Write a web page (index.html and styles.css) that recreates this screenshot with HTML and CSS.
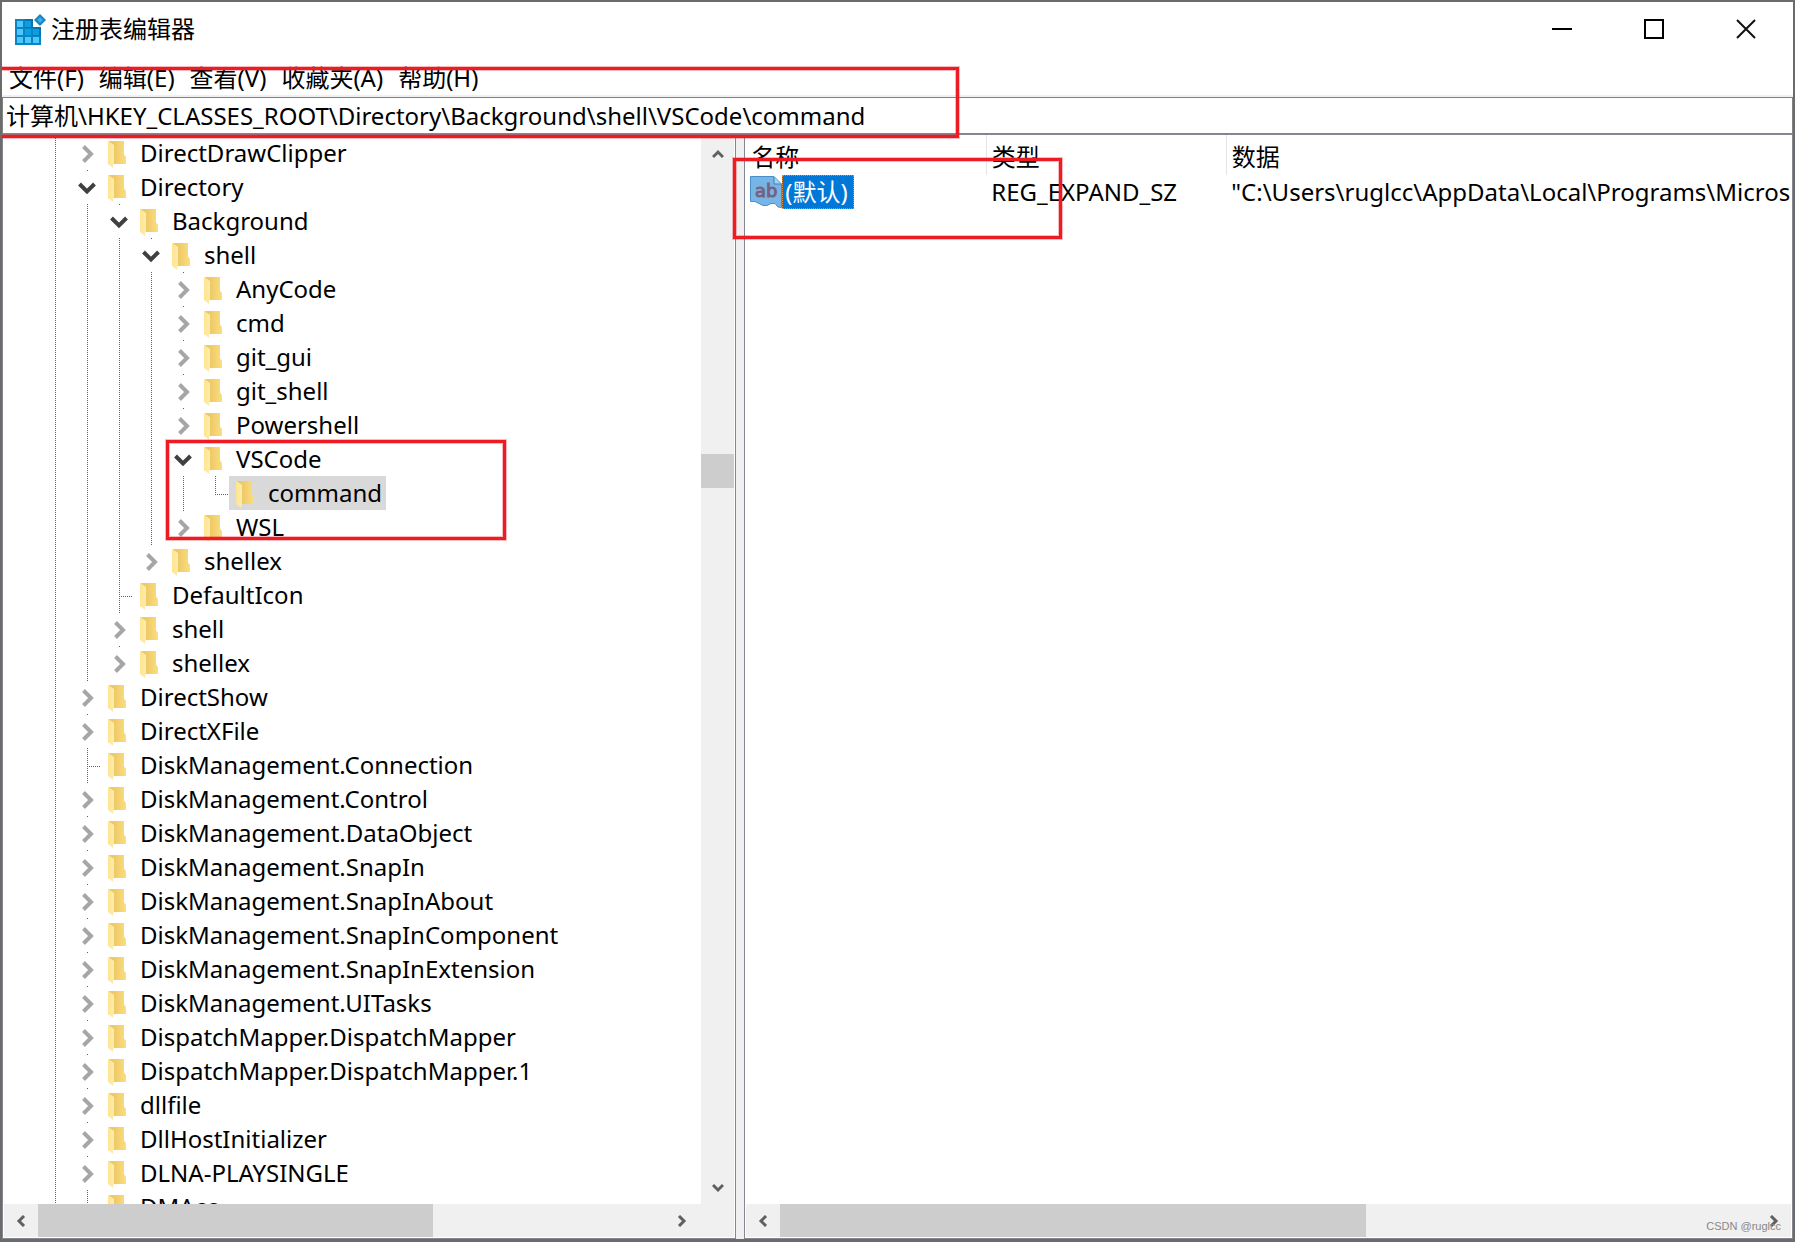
FILE: index.html
```html
<!DOCTYPE html>
<html lang="zh-CN">
<head>
  <meta charset="UTF-8" />
  <meta name="viewport" content="width=device-width, initial-scale=1.0"/>
  <title>注册表编辑器</title>
  <link rel="stylesheet" href="styles.css">
</head>
<body>

  <!-- shared icons -->
  <svg class="sprite" aria-hidden="true">
    <defs>
      <linearGradient id="folderBack" x1="0" x2="1">
        <stop offset="0.3" stop-color="#eec965"/>
        <stop offset="1" stop-color="#fbde80"/>
      </linearGradient>
      <linearGradient id="folderFront" x1="0" x2="1">
        <stop offset="0" stop-color="#ffe48f"/>
        <stop offset="1" stop-color="#ffecb0"/>
      </linearGradient>
    </defs>
    <symbol id="folder" viewBox="0 0 20 28">
      <path d="M1 0H16V13.500L18 16V23H5Z" fill="url(#folderBack)"/>
      <path d="M0 0L6 4V21L5 27L0 23Z" fill="url(#folderFront)"/>
    </symbol>
    <symbol id="closed" viewBox="0 0 32 34">
      <path d="M14.500 10.500L22 18L14.500 25.500" fill="none" stroke="#a6a6a6" stroke-width="4"/>
    </symbol>
    <symbol id="open" viewBox="0 0 32 34">
      <path d="M10.500 14L18 21.500L25.500 14" fill="none" stroke="#404040" stroke-width="4"/>
    </symbol>
    <symbol id="arrow" viewBox="0 0 12 12">
      <path d="M1 9L6 4L11 9" fill="none" stroke="#606060" stroke-width="3"/>
    </symbol>
  </svg>

  <div class="window">
    <header class="titlebar">
      <svg class="app-icon" viewBox="0 0 32 32" aria-hidden="true">
        <path d="M0 5H18V13H26V31H0Z" fill="#0c83c4"/>
        <path d="M10 5H18V13H26V22H18V14H10Z" fill="#0872ab"/>
        <g fill="#4cc8fa">
          <rect x="2" y="7" width="6" height="6"/>
          <rect x="2" y="15" width="6" height="6"/>
          <rect x="2" y="23" width="6" height="6"/>
          <rect x="10" y="23" width="6" height="6"/>
          <rect x="18" y="23" width="6" height="6"/>
        </g>
        <g fill="#0a9fe2">
          <rect x="10" y="7" width="6" height="6"/>
          <rect x="10" y="15" width="6" height="6"/>
          <rect x="18" y="15" width="6" height="6"/>
        </g>
        <path d="M25 0L31 6L25 12L19 6Z" fill="#1785bf"/>
        <path d="M25 3L28 6L25 9L22 6Z" fill="#41acdf"/>
      </svg>
      <h1 class="title">注册表编辑器</h1>
      <div class="win-buttons">
        <button aria-label="最小化"><svg viewBox="0 0 20 20"><path d="M0 10H20" stroke="#000" stroke-width="2"/></svg></button>
        <button aria-label="最大化"><svg viewBox="0 0 20 20"><path d="M1 1H19V19H1Z" fill="none" stroke="#000" stroke-width="2"/></svg></button>
        <button aria-label="关闭"><svg viewBox="0 0 20 20"><path d="M1 1L19 19M19 1L1 19" stroke="#111" stroke-width="2"/></svg></button>
      </div>
    </header>

    <nav class="menubar">
      <button>文件(F)</button>
      <button>编辑(E)</button>
      <button>查看(V)</button>
      <button>收藏夹(A)</button>
      <button>帮助(H)</button>
    </nav>

    <input class="address" type="text" aria-label="地址" spellcheck="false" value="计算机\HKEY_CLASSES_ROOT\Directory\Background\shell\VSCode\command">

    <main class="panes">
      <section class="pane tree-pane">
        <div class="pane-body">
          <div class="tree" id="tree" role="tree"></div>
          <div class="scrollbar vertical">
            <button aria-label="向上"><svg><use href="#arrow"/></svg></button>
            <div class="track"><span class="space-before"></span><span class="thumb"></span><span class="space-after"></span></div>
            <button aria-label="向下"><svg class="down"><use href="#arrow"/></svg></button>
          </div>
        </div>
        <div class="scrollbar horizontal">
          <button aria-label="向左"><svg class="left"><use href="#arrow"/></svg></button>
          <div class="track"><span class="thumb"></span></div>
          <button aria-label="向右"><svg class="right"><use href="#arrow"/></svg></button>
          <span class="corner"></span>
        </div>
      </section>

      <section class="pane list-pane">
        <div class="pane-body">
          <table class="values">
            <thead>
              <tr><th class="col-name">名称</th><th class="col-type">类型</th><th>数据</th></tr>
            </thead>
            <tbody>
              <tr>
                <td class="name-cell">
                  <div class="value-name">
                    <svg class="value-icon" viewBox="0 0 32 32" aria-hidden="true">
                      <path d="M0.500 0.500H24L31.500 8V31.500L28 31L25 27.500H21L17 29.500H13L5 25.500H0.500Z" fill="#76b5e6" stroke="#4a90c8"/>
                      <path d="M24 1V8H31" fill="#a5d2f3" stroke="#3c7fb4"/>
                      <text x="5" y="21">ab</text>
                    </svg>
                    <span class="value-label">(默认)</span>
                  </div>
                </td>
                <td>REG_EXPAND_SZ</td>
                <td>"C:\Users\ruglcc\AppData\Local\Programs\Microsoft VS Code\Code.exe" "%V"</td>
              </tr>
            </tbody>
          </table>
        </div>
        <div class="scrollbar horizontal">
          <button aria-label="向左"><svg class="left"><use href="#arrow"/></svg></button>
          <div class="track"><span class="thumb"></span></div>
          <button aria-label="向右"><svg class="right"><use href="#arrow"/></svg></button>
        </div>
      </section>
    </main>

    <div class="mark mark-address"></div>
    <div class="mark mark-value"></div>
    <div class="mark mark-key"></div>
    <div class="watermark">CSDN @ruglcc</div>
  </div>

  <script src="tree.js"></script>
</body>
</html>
```
FILE: styles.css
```css
* {
  box-sizing: border-box;
}

body {
  margin: 0;
  background: #6b6b6b;
  color: #000;
  font-family: "Noto Sans", "Noto Sans CJK SC", sans-serif;
  font-size: 24px;
  line-height: 34px;
}

button, input {
  font: inherit;
  color: inherit;
  border: none;
  background: none;
  padding: 0;
  margin: 0;
}

.sprite {
  position: absolute;
  width: 0;
  height: 0;
}

.window {
  position: relative;
  display: flex;
  flex-direction: column;
  height: 100vh;
  border: solid #6b6b6b;
  border-width: 2px 2px 3px 2px;
  background: #fff;
  overflow: hidden;
}

/* title bar */
.titlebar {
  display: flex;
  flex: none;
  height: 58px;
  padding: 0 1px 0 13px;
}

.app-icon {
  width: 32px;
  height: 32px;
  margin-top: 12px;
}

.title {
  flex: 1;
  margin: 0 0 0 4px;
  font-size: 24px;
  font-weight: normal;
  line-height: 54px;
}

.win-buttons {
  display: flex;
}

.win-buttons button {
  width: 92px;
  height: 54px;
}

.win-buttons svg {
  display: block;
  width: 20px;
  height: 20px;
  margin: 0 auto;
}

/* menu */
.menubar {
  display: flex;
  flex: none;
  gap: 15px;
  height: 37px;
  padding-left: 7px;
  border-bottom: 2px solid #f0f0f0;
}

.address {
  flex: none;
  width: 100%;
  height: 38px;
  padding: 0 3px 2px;
  border: 1px solid #828282;
  border-bottom: 2px solid #828790;
  outline: none;
}

/* panes */
.panes {
  display: flex;
  flex: 1;
  min-height: 0;
  background: #f0f0f0;
}

.pane {
  display: flex;
  flex-direction: column;
  min-width: 0;
  padding: 0 1px 1px;
  border: 1px solid #828790;
  border-top: none;
  background: #fff;
}

.tree-pane {
  flex: 0 0 41%;
  margin-right: 8px;
}

.list-pane {
  flex: 1;
}

.pane-body {
  display: flex;
  flex: 1;
  min-height: 0;
}

.tree {
  flex: 1;
  padding: 1px 0 0 33px;
  overflow: hidden;
}

.row {
  display: flex;
  height: 34px;
  white-space: nowrap;
}

.guide {
  flex: none;
  width: 32px;
  height: 34px;
}

.guide svg {
  display: block;
  width: 32px;
  height: 34px;
}

.guide.line {
  background: repeating-linear-gradient(#606060 0 1px, transparent 1px 2px) 18px 0 / 1px 34px no-repeat;
}

.guide.dot {
  background: linear-gradient(#606060, #606060) 18px 0 / 1px 1px no-repeat;
}

.guide.branch {
  background:
    repeating-linear-gradient(#606060 0 1px, transparent 1px 2px) 18px 0 / 1px 34px no-repeat,
    repeating-linear-gradient(90deg, #606060 0 1px, transparent 1px 2px) 18px 18px / 14px 1px no-repeat;
}

.guide.last {
  background:
    repeating-linear-gradient(#606060 0 1px, transparent 1px 2px) 18px 0 / 1px 18px no-repeat,
    repeating-linear-gradient(90deg, #606060 0 1px, transparent 1px 2px) 18px 18px / 14px 1px no-repeat;
}

.key {
  display: flex;
  gap: 12px;
  padding: 0 4px 0 7px;
}

.key svg {
  width: 20px;
  height: 28px;
  margin-top: 5px;
}

.key.selected {
  background: #d9d9d9;
}

/* scrollbars */
.scrollbar {
  display: flex;
  flex: none;
  background: #f0f0f0;
}

.scrollbar button {
  display: flex;
  flex: none;
  align-items: center;
  justify-content: center;
  width: 34px;
  height: 33px;
}

.scrollbar button svg {
  width: 12px;
  height: 12px;
}

.scrollbar .down { transform: rotate(180deg); }
.scrollbar .left { transform: rotate(-90deg); }
.scrollbar .right { transform: rotate(90deg); }

.track {
  display: flex;
  flex: 1;
}

.thumb {
  background: #cdcdcd;
}

.vertical {
  flex-direction: column;
  width: 33px;
  padding-top: 2px;
}

.vertical .track {
  flex-direction: column;
}

.vertical .space-before { flex: 284; }
.vertical .thumb { flex: 34; }
.vertical .space-after { flex: 682; }

.tree-pane .horizontal .thumb { width: 63%; }
.list-pane .horizontal .thumb { width: 60%; }

.corner {
  width: 35px;
}

/* value list */
.values {
  width: 100%;
  table-layout: fixed;
  border-collapse: collapse;
  align-self: flex-start;
}

.values th {
  height: 40px;
  padding: 4px 5px 0;
  border-right: 1px solid #e5e5e5;
  font-weight: normal;
  text-align: left;
}

.values th:last-child {
  border-right: none;
}

.col-name, .col-type {
  width: 240px;
}

.values td {
  padding: 0 0 0 5px;
  white-space: nowrap;
  overflow: hidden;
}

.values .name-cell {
  padding-left: 4px;
}

.value-name {
  display: flex;
}

.value-icon {
  width: 32px;
  height: 32px;
  margin-top: 1px;
}

.value-icon text {
  font: 18px "DejaVu Sans", sans-serif;
  fill: #756480;
  stroke: #756480;
}

.value-label {
  padding: 0 5px 0 2px;
  border: 1px dotted #e08a3c;
  background: #0078d7;
  color: #fff;
  line-height: 32px;
}

/* red highlight frames */
.mark {
  position: absolute;
  border: 3px solid #ed1c24;
  box-shadow: 0 0 0 1px rgba(237, 28, 36, 0.3), inset 0 0 0 1px rgba(237, 28, 36, 0.3);
  pointer-events: none;
}

.mark-address {
  left: -6px;
  top: 65px;
  width: 963px;
  height: 71px;
}

.mark-value {
  left: 731px;
  top: 156px;
  width: 329px;
  height: 81px;
}

.mark-key {
  left: 164px;
  top: 438px;
  width: 340px;
  height: 100px;
}

.watermark {
  position: absolute;
  right: 12px;
  bottom: 4px;
  font: 11px/18px "Liberation Sans", sans-serif;
  color: #888;
}
```
FILE: tree.js
```js
// [ancestor levels with a running line, own state, name]
const keys = [
  [1, 'closed', 'DirectDrawClipper'],
  [1, 'open', 'Directory'],
  [2, 'open', 'Background'],
  [3, 'open', 'shell'],
  [4, 'closed', 'AnyCode'],
  [4, 'closed', 'cmd'],
  [4, 'closed', 'git_gui'],
  [4, 'closed', 'git_shell'],
  [4, 'closed', 'Powershell'],
  [4, 'open', 'VSCode'],
  [5, 'last', 'command'],
  [4, 'closed', 'WSL'],
  [3, 'closed', 'shellex'],
  [2, 'branch', 'DefaultIcon'],
  [2, 'closed', 'shell'],
  [2, 'closed', 'shellex'],
  [1, 'closed', 'DirectShow'],
  [1, 'closed', 'DirectXFile'],
  [1, 'branch', 'DiskManagement.Connection'],
  [1, 'closed', 'DiskManagement.Control'],
  [1, 'closed', 'DiskManagement.DataObject'],
  [1, 'closed', 'DiskManagement.SnapIn'],
  [1, 'closed', 'DiskManagement.SnapInAbout'],
  [1, 'closed', 'DiskManagement.SnapInComponent'],
  [1, 'closed', 'DiskManagement.SnapInExtension'],
  [1, 'closed', 'DiskManagement.UITasks'],
  [1, 'closed', 'DispatchMapper.DispatchMapper'],
  [1, 'closed', 'DispatchMapper.DispatchMapper.1'],
  [1, 'closed', 'dllfile'],
  [1, 'closed', 'DllHostInitializer'],
  [1, 'closed', 'DLNA-PLAYSINGLE'],
  [1, 'branch', 'DMAcc']
];

function renderRow([level, state, name]) {
  const lines = '<span class="guide line"></span>'.repeat(level);
  const own = state === 'open' || state === 'closed'
    ? `<button class="guide dot" aria-label="${name}"><svg><use href="#${state}"/></svg></button>`
    : `<span class="guide ${state}"></span>`;
  const selected = name === 'command';
  return `<div class="row" role="treeitem" aria-level="${level}" aria-selected="${selected}">
    ${lines}${own}<span class="key${selected ? ' selected' : ''}"><svg><use href="#folder"/></svg>${name}</span>
  </div>`;
}

document.getElementById('tree').innerHTML = keys.map(renderRow).join('');
```
